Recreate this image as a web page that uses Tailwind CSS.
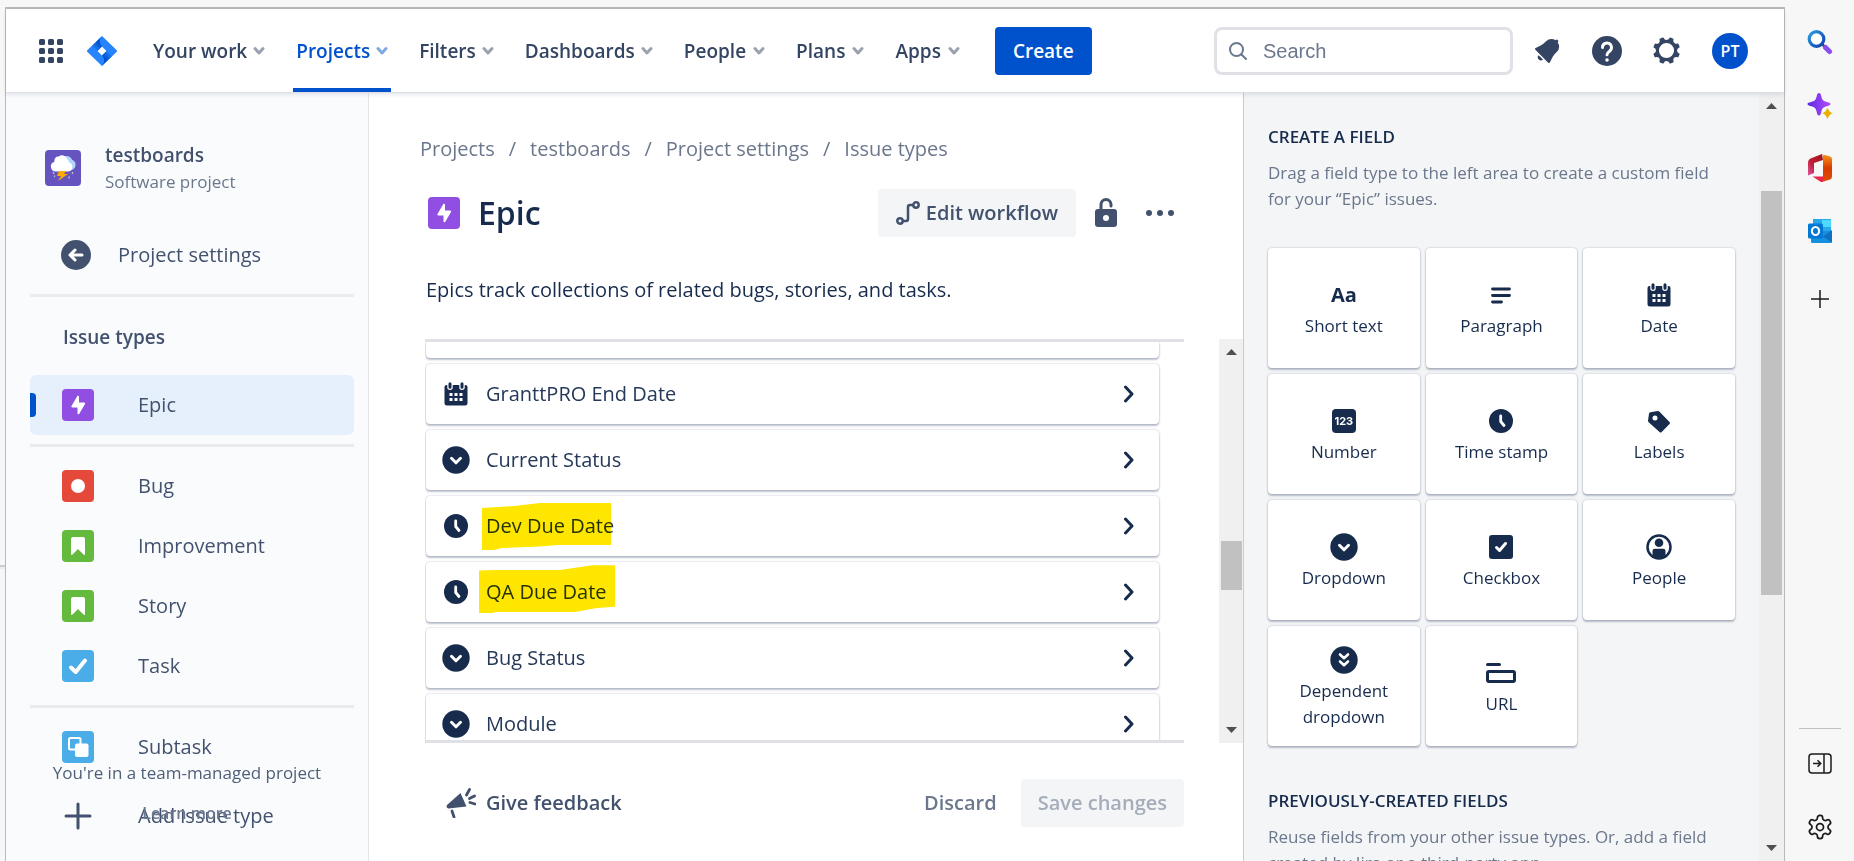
<!DOCTYPE html>
<html lang="en">
<head>
<meta charset="utf-8">
<title>Epic - Issue types - testboards</title>
<script src="https://cdn.jsdelivr.net/npm/@tailwindcss/browser@4"></script>
</head>
<body class="h-screen overflow-hidden bg-[#f7f7f7] font-['Open_Sans','Noto_Sans',sans-serif] text-xl leading-7 text-[#172b4d]">

<svg class="hidden" aria-hidden="true">
  <defs>
    <symbol id="chev" viewBox="0 0 12 10"><path d="M2 2.500 6 7l4-4.500" fill="none" stroke="currentColor" stroke-width="3" stroke-linecap="round" stroke-linejoin="round"/></symbol>
    <symbol id="right" viewBox="0 0 12 18"><path d="M2.500 2 9 9l-6.500 7" fill="none" stroke="currentColor" stroke-width="3" stroke-linecap="round" stroke-linejoin="round"/></symbol>
    <symbol id="calendar" viewBox="0 0 24 24"><path d="M2.500 3h19A2 2 0 0 1 23.500 5v16a2.500 2.500 0 0 1-2.500 2.500H3A2.500 2.500 0 0 1 .5 21V5a2 2 0 0 1 2-2Z" fill="currentColor"/><path d="M6 1.800v3.400M18 1.800v3.400" stroke="#fff" stroke-width="5.500" stroke-linecap="round"/><path d="M6 1.800v3.400M18 1.800v3.400" stroke="currentColor" stroke-width="3" stroke-linecap="round"/><path d="M5.500 11h3v3h-3zM10.500 11h3v3h-3zM15.500 11h3v3h-3zM5.500 16h3v3h-3zM10.500 16h3v3h-3zM15.500 16h3v3h-3z" fill="#fff"/></symbol>
    <symbol id="dropdown" viewBox="0 0 28 28"><circle cx="14" cy="14" r="13.700" fill="currentColor"/><path d="m9.500 12.300 4.500 4.500 4.500-4.500" fill="none" stroke="#fff" stroke-width="3" stroke-linecap="round" stroke-linejoin="round"/></symbol>
    <symbol id="dropdown2" viewBox="0 0 28 28"><circle cx="14" cy="14" r="13.700" fill="currentColor"/><path d="m10 8.500 4 3.700 4-3.700M10 15.500l4 3.700 4-3.700" fill="none" stroke="#fff" stroke-width="2.600" stroke-linecap="round" stroke-linejoin="round"/></symbol>
    <symbol id="clock" viewBox="0 0 24 24"><circle cx="12" cy="12" r="12" fill="currentColor"/><path d="M11.700 7v5.500l3.300 4" fill="none" stroke="#fff" stroke-width="2.800" stroke-linecap="round" stroke-linejoin="round"/></symbol>
    <symbol id="epic" viewBox="0 0 32 32"><rect width="32" height="32" rx="4" fill="#904ee2"/><path d="M15.200 7.200 9.500 17a1 1 0 0 0 .9 1.500h5.100v5.800c0 1 1.300 1.300 1.800.4L23 14.900a1 1 0 0 0-.9-1.500H17V7.700c0-1-1.300-1.400-1.800-.5Z" fill="#fff"/></symbol>
    <symbol id="bug" viewBox="0 0 32 32"><rect width="32" height="32" rx="4" fill="#e5493a"/><circle cx="16" cy="16" r="7" fill="#fff"/></symbol>
    <symbol id="story" viewBox="0 0 32 32"><rect width="32" height="32" rx="4" fill="#63ba3c"/><path d="M11 7h10a2 2 0 0 1 2 2v15c0 1-.8 1.300-1.500.6L16 19l-5.500 5.600C9.800 25.300 9 25 9 24V9a2 2 0 0 1 2-2Z" fill="#fff"/></symbol>
    <symbol id="task" viewBox="0 0 32 32"><rect width="32" height="32" rx="4" fill="#4bade8"/><path d="m9 17.500 4.700 4.500L23 10.500" fill="none" stroke="#fff" stroke-width="4" stroke-linecap="round" stroke-linejoin="round"/></symbol>
    <symbol id="subtask" viewBox="0 0 32 32"><rect width="32" height="32" rx="4" fill="#4bade8"/><rect x="7" y="7" width="11.500" height="11.500" rx="1.500" fill="none" stroke="#fff" stroke-width="2"/><rect x="13" y="12.500" width="13.500" height="13.500" rx="2" fill="#fff"/></symbol>
  </defs>
</svg>

<div class="flex h-full pt-[7px]">
  <div class="w-[5px] shrink-0" aria-hidden="true"><div class="mt-[558px] h-1 border-t-2 border-[#cfcfcf] bg-[#ececec]"></div></div>

  <div class="flex min-w-0 flex-1 flex-col border-x border-t-2 border-[#b9b9b9] bg-white">
    <header class="relative z-10 flex h-[84px] shrink-0 items-center border-b border-[#dcdfe6] bg-white pr-9 pl-[33px] text-[19px] font-semibold text-[#344563] shadow-[0_2px_4px_rgba(9,30,66,0.1)]">
      <button class="mr-6" aria-label="Switch to">
        <svg class="size-6" viewBox="0 0 24 24" fill="currentColor"><rect width="6" height="6" rx="1.500"/><rect x="9" width="6" height="6" rx="1.500"/><rect x="18" width="6" height="6" rx="1.500"/><rect y="9" width="6" height="6" rx="1.500"/><rect x="9" y="9" width="6" height="6" rx="1.500"/><rect x="18" y="9" width="6" height="6" rx="1.500"/><rect y="18" width="6" height="6" rx="1.500"/><rect x="9" y="18" width="6" height="6" rx="1.500"/><rect x="18" y="18" width="6" height="6" rx="1.500"/></svg>
      </button>
      <a href="#" class="mr-[33px]" aria-label="Jira home">
        <svg class="size-[30px]" viewBox="0 0 30 30">
          <defs>
            <linearGradient id="ja" x1="14" y1="9" x2="8" y2="15" gradientUnits="userSpaceOnUse"><stop offset="0" stop-color="#0052cc"/><stop offset="1" stop-color="#2684ff"/></linearGradient>
            <linearGradient id="jb" x1="16" y1="21" x2="22" y2="15" gradientUnits="userSpaceOnUse"><stop offset="0" stop-color="#0052cc"/><stop offset="1" stop-color="#2684ff"/></linearGradient>
          </defs>
          <path fill="#2684ff" fill-rule="evenodd" d="M15 0 29.500 14a1.400 1.400 0 0 1 0 2L15 30 .5 16a1.400 1.400 0 0 1 0-2ZM15 10.500 10.500 15l4.500 4.500 4.500-4.500Z"/>
          <path fill="url(#ja)" d="M15 10.500A7 7 0 0 1 15 .3L5 10l5.500 5Z"/>
          <path fill="url(#jb)" d="M19.500 15 15 19.500a7 7 0 0 1 0 10.200L25 20Z"/>
        </svg>
      </a>
      <nav class="flex h-full gap-[25px]" aria-label="Primary">
        <button class="flex items-center gap-[6px] px-[3px]">Your work<svg class="h-[10px] w-3 text-[#9aa1b1]"><use href="#chev"/></svg></button>
        <button class="flex items-center gap-[6px] border-y-4 border-t-transparent border-b-[#0052cc] px-[3px] text-[#0052cc]" aria-current="page">Projects<svg class="h-[10px] w-3 text-[#7fa8e5]"><use href="#chev"/></svg></button>
        <button class="flex items-center gap-[6px] px-[3px]">Filters<svg class="h-[10px] w-3 text-[#9aa1b1]"><use href="#chev"/></svg></button>
        <button class="flex items-center gap-[6px] px-[3px]">Dashboards<svg class="h-[10px] w-3 text-[#9aa1b1]"><use href="#chev"/></svg></button>
        <button class="flex items-center gap-[7px] px-[3px]">People<svg class="h-[10px] w-3 text-[#9aa1b1]"><use href="#chev"/></svg></button>
        <button class="flex items-center gap-[7px] px-[3px]">Plans<svg class="h-[10px] w-3 text-[#9aa1b1]"><use href="#chev"/></svg></button>
        <button class="flex items-center gap-[7px] px-[3px]">Apps<svg class="h-[10px] w-3 text-[#9aa1b1]"><use href="#chev"/></svg></button>
      </nav>
      <button class="ml-8 h-12 rounded-[4px] bg-[#0052cc] px-[18px] text-white">Create</button>
      <label class="ml-auto flex h-12 w-[299px] items-center gap-4 rounded-[8px] border-[3px] border-[#dfe1e6] px-3">
        <svg class="size-[18px] shrink-0 text-[#6b778c]" viewBox="0 0 18 18" fill="none" stroke="currentColor" stroke-width="2" stroke-linecap="round"><circle cx="7.500" cy="7.500" r="6.500"/><path d="m12.500 12.500 4.500 4.500"/></svg>
        <input type="search" placeholder="Search" aria-label="Search" class="min-w-0 flex-1 bg-transparent font-['Liberation_Sans',sans-serif] text-xl font-normal outline-none placeholder:text-[#6b778c]">
      </label>
      <div class="ml-4 flex items-center gap-6">
        <button aria-label="Notifications"><svg class="size-9" viewBox="0 0 24 24" fill="currentColor"><path d="M6.485 17.669a2 2 0 002.829 0l-2.829-2.830a2 2 0 000 2.830zm4.897-12.191l-.725.725c-.782.782-2.210 1.813-3.206 2.311l-3.017 1.509c-.495.248-.584.774-.187 1.171l8.556 8.556c.398.396.922.313 1.171-.188l1.510-3.016c.494-.988 1.526-2.420 2.311-3.206l.725-.726a5.048 5.048 0 00.640-6.356 1.010 1.010 0 10-1.354-1.494c-.023.025-.046.049-.066.075a5.043 5.043 0 00-2.788-.840 5.036 5.036 0 00-3.570 1.478z"/></svg></button>
        <button aria-label="Help"><svg class="size-9" viewBox="0 0 24 24"><circle cx="12" cy="12" r="10" fill="currentColor"/><path d="M9 9.700a3 3 0 1 1 4.700 2.400c-1 .7-1.700 1.200-1.700 2.400" fill="none" stroke="#fff" stroke-width="2" stroke-linecap="round"/><circle cx="12" cy="18" r="1.200" fill="#fff"/></svg></button>
        <button aria-label="Settings"><svg class="size-9" viewBox="0 0 24 24" fill="currentColor" fill-rule="evenodd"><path d="M11.701 16.700a5.002 5.002 0 110-10.003 5.002 5.002 0 010 10.004m8.368-3.117a1.995 1.995 0 01-1.346-1.885c0-.876.563-1.613 1.345-1.885a.48.48 0 00.315-.574 8.947 8.947 0 00-.836-1.993.477.477 0 00-.598-.195 2.040 2.040 0 01-1.290.080 1.988 1.988 0 01-1.404-1.395 2.040 2.040 0 01.076-1.297.478.478 0 00-.196-.597 8.980 8.980 0 00-1.975-.826.479.479 0 00-.574.314 1.995 1.995 0 01-1.885 1.346 1.994 1.994 0 01-1.884-1.345.482.482 0 00-.575-.315c-.708.200-1.379.485-2.004.842a.47.47 0 00-.198.582A2.002 2.002 0 014.445 7.060a.478.478 0 00-.595.196 8.946 8.946 0 00-.833 1.994.48.48 0 00.308.572 1.995 1.995 0 011.323 1.877c0 .867-.552 1.599-1.324 1.877a.479.479 0 00-.308.570 8.990 8.990 0 00.723 1.790.477.477 0 00.624.194c.595-.273 1.343-.264 2.104.238.117.077.225.185.302.300.527.800.512 1.580.198 2.188a.473.473 0 00.168.628 8.946 8.946 0 002.110.897.474.474 0 00.570-.313 1.995 1.995 0 011.886-1.353c.878 0 1.618.567 1.887 1.353a.475.475 0 00.570.313 8.964 8.964 0 002.084-.883.473.473 0 00.167-.631c-.318-.608-.337-1.393.191-2.195.077-.116.185-.225.302-.302.772-.511 1.527-.513 2.125-.230a.477.477 0 00.628-.190 8.925 8.925 0 00.728-1.793.478.478 0 00-.314-.573"/></svg></button>
        <button class="ml-[3px] size-9 rounded-full bg-[#0052cc] text-base font-semibold text-white" aria-label="Your profile">PT</button>
      </div>
    </header>

    <div class="flex min-h-0 flex-1">
      <aside class="relative w-[363px] shrink-0 overflow-hidden border-r border-[#e3e5ea] bg-[#fafbfd] pt-12 pr-[14px] pl-6 text-[#42526e]">
        <div class="flex items-center gap-6 pl-[15px]">
          <svg class="size-9 shrink-0" viewBox="0 0 36 36"><rect width="36" height="36" rx="4" fill="#6554c0"/><path d="M19 20h6.500a5.300 5.300 0 0 0 1.500-10.300A6 6 0 0 0 17 8Z" fill="#b3d4ff"/><path d="M10.500 21.500a5 5 0 0 1-1-9.800 4 4 0 0 1 4.300-5.200 5.300 5.300 0 0 1 8.200 2.200 6 6 0 0 1 2 3.800 4.600 4.600 0 0 1-1.500 9Z" fill="#fff"/><path d="m14 21-2 5h4l-3 5 10-7h-4l2-3Z" fill="#ffab00"/><path d="M8.500 22.500v1M27.500 22.500v1M24 27v1M9.500 26v.5" stroke="#b3bac5" stroke-width="1.500" stroke-linecap="round"/></svg>
          <div>
            <p class="text-[19px] leading-7 font-semibold">testboards</p>
            <p class="text-[17px] leading-[26px] text-[#6b778c]">Software project</p>
          </div>
        </div>

        <a href="#" class="mt-[30px] flex h-[60px] items-center gap-[27px] pl-[31px]">
          <svg class="size-[30px]" viewBox="0 0 30 30"><circle cx="15" cy="15" r="15" fill="currentColor"/><path d="M21 15H9.500m4.500-5-5 5 5 5" fill="none" stroke="#fff" stroke-width="3" stroke-linecap="round" stroke-linejoin="round"/></svg>
          <span>Project settings</span>
        </a>
        <hr class="mt-[9px] border-t-[3px] border-[#ebecee]">
        <h2 class="mt-[26px] pl-[33px] text-[19px] leading-7 font-semibold">Issue types</h2>

        <nav class="mt-6 space-y-[9px]" aria-label="Issue types">
          <a href="#" class="flex h-[60px] items-center rounded-md bg-[#e6f0fc]" aria-current="page"><span class="mr-[26px] h-6 w-[6px] rounded-r bg-[#0052cc]"></span><svg class="mr-11 size-8"><use href="#epic"/></svg>Epic</a>
          <hr class="border-t-[3px] border-[#e8eaed]">
          <div>
            <a href="#" class="flex h-[60px] items-center gap-11 pl-8"><svg class="size-8"><use href="#bug"/></svg>Bug</a>
            <a href="#" class="flex h-[60px] items-center gap-11 pl-8"><svg class="size-8"><use href="#story"/></svg>Improvement</a>
            <a href="#" class="flex h-[60px] items-center gap-11 pl-8"><svg class="size-8"><use href="#story"/></svg>Story</a>
            <a href="#" class="flex h-[60px] items-center gap-11 pl-8"><svg class="size-8"><use href="#task"/></svg>Task</a>
          </div>
          <hr class="border-t-[3px] border-[#e8eaed]">
          <a href="#" class="flex h-[60px] items-center gap-11 pl-8"><svg class="size-8"><use href="#subtask"/></svg>Subtask</a>
          <button class="flex h-[60px] w-full items-center gap-11 pl-8"><svg class="size-8" viewBox="0 0 32 32"><path d="M16 4v24M4 16h24" stroke="currentColor" stroke-width="3" stroke-linecap="round"/></svg>Add issue type</button>
        </nav>

        <div class="absolute inset-x-0 bottom-[35px] text-center text-[17px] leading-[26px]">
          <p class="text-[#505f79]">You're in a team-managed project</p>
          <a href="#" class="mt-[14px] block text-base leading-[26px] font-semibold text-[#6b778c]">Learn more</a>
        </div>
      </aside>

      <main class="flex min-w-0 flex-1 flex-col pt-[42px] pl-14">
        <nav class="-ml-[5px] flex gap-[14px] pr-[59px] text-[#6b778c]" aria-label="Breadcrumb">
          <a href="#">Projects</a><span>/</span><a href="#">testboards</a><span>/</span><a href="#">Project settings</a><span>/</span><a href="#">Issue types</a>
        </nav>
        <div class="mt-[26px] flex h-12 items-center pr-[59px] pl-[3px] text-[#42526e]">
          <svg class="size-8"><use href="#epic"/></svg>
          <h1 class="ml-[18px] text-[32px] leading-10 font-semibold text-[#172b4d]">Epic</h1>
          <button class="mr-[6px] ml-auto flex h-12 items-center gap-[6px] rounded-[4px] bg-[#f4f5f7] px-[18px] text-xl font-semibold">
            <svg class="size-6" viewBox="0 0 24 24" fill="none" stroke="currentColor" stroke-width="2.500"><circle cx="4" cy="20" r="2.700"/><circle cx="20" cy="4" r="2.700"/><path d="M7 20h3a2 2 0 0 0 2-2V6a2 2 0 0 1 2-2h3"/></svg>Edit workflow
          </button>
          <button class="mr-[6px] flex size-12 items-center justify-center" aria-label="Unlocked"><svg class="h-[30px] w-6" viewBox="0 0 24 30"><rect x="1" y="11" width="22" height="18" rx="3" fill="currentColor"/><path d="M7 12V6.500a5 5 0 0 1 10 0V8" fill="none" stroke="currentColor" stroke-width="3" stroke-linecap="round"/><circle cx="12" cy="20" r="3" fill="#fff"/></svg></button>
          <button class="flex size-12 items-center justify-center" aria-label="More actions"><svg class="h-[6px] w-7" viewBox="0 0 28 6" fill="currentColor"><circle cx="3" cy="3" r="3"/><circle cx="14" cy="3" r="3"/><circle cx="25" cy="3" r="3"/></svg></button>
        </div>
        <p class="mt-[39px] pr-[59px] pl-px">Epics track collections of related bugs, stories, and tasks.</p>

        <div class="mt-[35px] flex min-h-0 flex-1 gap-[35px]">
          <div class="min-w-0 flex-1 overflow-hidden border-y-[3px] border-[#dfe1e6] pr-[25px] pl-px text-[#253858]">
            <ul class="space-y-[6px]">
              <li class="h-4 rounded-b-[4px] bg-white shadow-[0_2px_2px_rgba(9,30,66,0.25),0_0_2px_rgba(9,30,66,0.31)]"></li>
              <li><button class="flex h-[60px] w-full items-center rounded-[4px] bg-white px-6 shadow-[0_2px_2px_rgba(9,30,66,0.25),0_0_2px_rgba(9,30,66,0.31)]"><span class="-mx-2 mr-2 flex w-7 justify-center text-[#172b4d]"><svg class="size-6"><use href="#calendar"/></svg></span><span class="ml-2">GranttPRO End Date</span><svg class="ml-auto h-[18px] w-3 text-[#172b4d]"><use href="#right"/></svg></button></li>
              <li><button class="flex h-[60px] w-full items-center rounded-[4px] bg-white px-6 shadow-[0_2px_2px_rgba(9,30,66,0.25),0_0_2px_rgba(9,30,66,0.31)]"><span class="-mx-2 mr-2 flex w-7 justify-center text-[#172b4d]"><svg class="size-7"><use href="#dropdown"/></svg></span><span class="ml-2">Current Status</span><svg class="ml-auto h-[18px] w-3 text-[#172b4d]"><use href="#right"/></svg></button></li>
              <li><button class="flex h-[60px] w-full items-center rounded-[4px] bg-white px-6 shadow-[0_2px_2px_rgba(9,30,66,0.25),0_0_2px_rgba(9,30,66,0.31)]"><span class="-mx-2 mr-2 flex w-7 justify-center text-[#172b4d]"><svg class="size-6"><use href="#clock"/></svg></span><span class="relative ml-2">Dev Due Date<svg class="absolute -top-[10px] -left-1 h-12 w-[130px] mix-blend-multiply" viewBox="0 0 130 48"><path d="M0 6 32 4 58 1h71v42H76L58 44.500 20 46l-8 2H0Z" fill="#ffe600"/></svg></span><svg class="ml-auto h-[18px] w-3 text-[#172b4d]"><use href="#right"/></svg></button></li>
              <li><button class="flex h-[60px] w-full items-center rounded-[4px] bg-white px-6 shadow-[0_2px_2px_rgba(9,30,66,0.25),0_0_2px_rgba(9,30,66,0.31)]"><span class="-mx-2 mr-2 flex w-7 justify-center text-[#172b4d]"><svg class="size-6"><use href="#clock"/></svg></span><span class="relative ml-2">QA Due Date<svg class="absolute -top-[13px] -left-[7px] h-12 w-[136px] mix-blend-multiply" viewBox="0 0 136 48"><path d="M0 5.500 16 5h65l32-4.700h23v41.500l-18 1.200-22 4H16l-2 1H0Z" fill="#ffe600"/></svg></span><svg class="ml-auto h-[18px] w-3 text-[#172b4d]"><use href="#right"/></svg></button></li>
              <li><button class="flex h-[60px] w-full items-center rounded-[4px] bg-white px-6 shadow-[0_2px_2px_rgba(9,30,66,0.25),0_0_2px_rgba(9,30,66,0.31)]"><span class="-mx-2 mr-2 flex w-7 justify-center text-[#172b4d]"><svg class="size-7"><use href="#dropdown"/></svg></span><span class="ml-2">Bug Status</span><svg class="ml-auto h-[18px] w-3 text-[#172b4d]"><use href="#right"/></svg></button></li>
              <li><button class="flex h-[60px] w-full items-center rounded-[4px] bg-white px-6 shadow-[0_2px_2px_rgba(9,30,66,0.25),0_0_2px_rgba(9,30,66,0.31)]"><span class="-mx-2 mr-2 flex w-7 justify-center text-[#172b4d]"><svg class="size-7"><use href="#dropdown"/></svg></span><span class="ml-2">Module</span><svg class="ml-auto h-[18px] w-3 text-[#172b4d]"><use href="#right"/></svg></button></li>
            </ul>
          </div>
          <div class="flex w-6 shrink-0 flex-col items-center bg-[#f0f0f0] py-[10px] text-[#505050]" aria-hidden="true">
            <svg class="h-[6px] w-[11px]" viewBox="0 0 11 6" fill="currentColor"><path d="M5.500 0 11 6H0Z"/></svg>
            <div class="mt-[186px] h-[49px] w-[21px] bg-[#c1c1c1]"></div>
            <svg class="mt-auto h-[6px] w-[11px]" viewBox="0 0 11 6" fill="currentColor"><path d="M0 0h11L5.500 6Z"/></svg>
          </div>
        </div>

        <footer class="flex shrink-0 items-center pt-9 pr-[59px] pb-[34px] pl-[21px] text-xl font-semibold text-[#42526e]">
          <button class="flex items-center gap-[10px]">
            <svg class="size-[30px]" viewBox="0 0 30 30"><path d="M1 17 14.500 5l6 13.500L2.500 20.500C.7 20.600 0 18.200 1 17Z" fill="currentColor"/><path d="m6 23 2 6M20.500 7 23.500 1.500M23.500 10.500l5-2.500M24 14.500l5 1.500" stroke="currentColor" stroke-width="2.800" stroke-linecap="round"/></svg>Give feedback
          </button>
          <button class="ml-auto h-12 px-6 text-[#6b778c]">Discard</button>
          <button class="h-12 rounded-[4px] bg-[#f4f5f7] px-[17px] text-[#a5adba]" disabled>Save changes</button>
        </footer>
      </main>

      <aside class="flex w-[541px] shrink-0 overflow-hidden border-l border-[#c7ccd4] bg-[#f4f5f7]">
        <div class="min-w-0 flex-1 pt-[31px] pr-6 pl-6 text-[17px] leading-[26px]">
          <h2 class="font-semibold">CREATE A FIELD</h2>
          <p class="mt-[10px] text-[#6b778c]">Drag a field type to the left area to create a custom field for your “Epic” issues.</p>
          <div class="mt-9 grid auto-rows-[120px] grid-cols-3 gap-[6px]">
            <button class="flex flex-col items-center justify-center rounded-sm bg-white shadow-[0_2px_2px_rgba(9,30,66,0.25),0_0_2px_rgba(9,30,66,0.31)]"><span class="flex h-9 items-center text-xl font-bold">Aa</span>Short text</button>
            <button class="flex flex-col items-center justify-center rounded-sm bg-white shadow-[0_2px_2px_rgba(9,30,66,0.25),0_0_2px_rgba(9,30,66,0.31)]"><span class="flex h-9 items-center"><svg class="h-[17px] w-5" viewBox="0 0 20 17"><path d="M1.500 2h17M1.500 8.500h17M1.500 15h9" stroke="currentColor" stroke-width="2.800" stroke-linecap="round"/></svg></span>Paragraph</button>
            <button class="flex flex-col items-center justify-center rounded-sm bg-white shadow-[0_2px_2px_rgba(9,30,66,0.25),0_0_2px_rgba(9,30,66,0.31)]"><span class="flex h-9 items-center"><svg class="size-6"><use href="#calendar"/></svg></span>Date</button>
            <button class="flex flex-col items-center justify-center rounded-sm bg-white shadow-[0_2px_2px_rgba(9,30,66,0.25),0_0_2px_rgba(9,30,66,0.31)]"><span class="flex h-9 items-center"><span class="flex size-6 items-center justify-center rounded-[4px] bg-[#172b4d] font-[Inter,sans-serif] text-[11px] font-bold text-white">123</span></span>Number</button>
            <button class="flex flex-col items-center justify-center rounded-sm bg-white shadow-[0_2px_2px_rgba(9,30,66,0.25),0_0_2px_rgba(9,30,66,0.31)]"><span class="flex h-9 items-center"><svg class="size-6"><use href="#clock"/></svg></span>Time stamp</button>
            <button class="flex flex-col items-center justify-center rounded-sm bg-white shadow-[0_2px_2px_rgba(9,30,66,0.25),0_0_2px_rgba(9,30,66,0.31)]"><span class="flex h-9 items-center"><svg class="size-6" viewBox="0 0 24 24"><path d="M3.500 3.200 10.500 2a2 2 0 0 1 1.800.6L22.500 13a1.500 1.500 0 0 1 0 2l-7.800 8a1.500 1.500 0 0 1-2.200 0L1.700 13.300A2 2 0 0 1 1 11.700l1-7a1.800 1.800 0 0 1 1.500-1.500Z" fill="currentColor"/><circle cx="8" cy="9" r="2.500" fill="#fff"/></svg></span>Labels</button>
            <button class="flex flex-col items-center justify-center rounded-sm bg-white shadow-[0_2px_2px_rgba(9,30,66,0.25),0_0_2px_rgba(9,30,66,0.31)]"><span class="flex h-9 items-center"><svg class="size-7"><use href="#dropdown"/></svg></span>Dropdown</button>
            <button class="flex flex-col items-center justify-center rounded-sm bg-white shadow-[0_2px_2px_rgba(9,30,66,0.25),0_0_2px_rgba(9,30,66,0.31)]"><span class="flex h-9 items-center"><svg class="size-6" viewBox="0 0 24 24"><rect width="24" height="24" rx="3" fill="currentColor"/><path d="m7.500 12.500 3 3 6-7" fill="none" stroke="#fff" stroke-width="3" stroke-linecap="round" stroke-linejoin="round"/></svg></span>Checkbox</button>
            <button class="flex flex-col items-center justify-center rounded-sm bg-white shadow-[0_2px_2px_rgba(9,30,66,0.25),0_0_2px_rgba(9,30,66,0.31)]"><span class="flex h-9 items-center"><svg class="size-[26px]" viewBox="0 0 26 26"><circle cx="13" cy="13" r="11.500" fill="none" stroke="currentColor" stroke-width="2.500"/><circle cx="13" cy="8.800" r="4.300" fill="currentColor"/><path d="M6.500 22v-5a2.300 2.300 0 0 1 2.300-2.300h8.400a2.300 2.300 0 0 1 2.300 2.300v5l-6.500 2.800Z" fill="currentColor"/></svg></span>People</button>
            <button class="flex flex-col items-center justify-center rounded-sm bg-white px-6 shadow-[0_2px_2px_rgba(9,30,66,0.25),0_0_2px_rgba(9,30,66,0.31)]"><span class="flex h-9 items-center"><svg class="size-7"><use href="#dropdown2"/></svg></span>Dependent dropdown</button>
            <button class="flex flex-col items-center justify-center rounded-sm bg-white shadow-[0_2px_2px_rgba(9,30,66,0.25),0_0_2px_rgba(9,30,66,0.31)]"><span class="flex h-9 items-center"><svg class="h-[21px] w-[30px]" viewBox="0 0 30 21"><path d="M1.500 1.500h12" stroke="currentColor" stroke-width="3" stroke-linecap="round"/><rect x="1.500" y="8.500" width="27" height="10" rx="1.500" fill="none" stroke="currentColor" stroke-width="3"/></svg></span>URL</button>
          </div>
          <h2 class="mt-[42px] font-semibold">PREVIOUSLY-CREATED FIELDS</h2>
          <p class="mt-[10px] text-[#6b778c]">Reuse fields from your other issue types. Or, add a field created by Jira or a third-party app.</p>
        </div>
        <div class="flex w-[25px] shrink-0 flex-col items-center bg-[#f0f0f0] py-[10px] text-[#505050]" aria-hidden="true">
          <svg class="h-[6px] w-[11px]" viewBox="0 0 11 6" fill="currentColor"><path d="M5.500 0 11 6H0Z"/></svg>
          <div class="mt-[82px] h-[404px] w-[21px] bg-[#c1c1c1]"></div>
          <svg class="mt-auto h-[6px] w-[11px]" viewBox="0 0 11 6" fill="currentColor"><path d="M0 0h11L5.500 6Z"/></svg>
        </div>
      </aside>
    </div>
  </div>

  <aside class="flex w-[69px] shrink-0 flex-col items-center pt-[22px] pb-5 text-[#1b1b1b]" aria-label="Browser sidebar">
    <button aria-label="Search"><svg class="size-[26px]" viewBox="0 0 26 26"><defs><linearGradient id="sb" x1="0" y1="0" x2="1" y2="1"><stop offset="0" stop-color="#2b9be0"/><stop offset="1" stop-color="#0f3fb5"/></linearGradient></defs><path d="m15.500 15.500 3 3" stroke="#444" stroke-width="2.500"/><circle cx="9.500" cy="10" r="7.300" fill="#fff" stroke="url(#sb)" stroke-width="3.200"/><path d="m18.500 18.500 4 4" stroke="#8a4df0" stroke-width="5" stroke-linecap="round"/></svg></button>
    <button class="mt-[38px]" aria-label="Discover"><svg class="size-[26px]" viewBox="0 0 26 26"><defs><linearGradient id="st" x1="0" y1=".5" x2="1" y2=".5"><stop offset="0" stop-color="#5a2be0"/><stop offset="1" stop-color="#b44dff"/></linearGradient></defs><path d="M12 0c1.300 0 1.800 1 2.300 3.200 1 4 1.700 4.700 5.700 5.700 2.300.6 3.500 1 3.500 2.100s-1.200 1.600-3.500 2.200c-4 1-4.700 1.700-5.700 5.700-.5 2.200-1 3.600-2.300 3.600s-1.800-1.400-2.300-3.600c-1-4-1.700-4.700-5.700-5.700C1.700 12.600.500 12.200.500 11s1.200-1.500 3.500-2.100c4-1 4.700-1.700 5.700-5.700C10.200 1 10.700 0 12 0Z" fill="url(#st)"/><path d="M20.500 15c.7 0 1 4.300 5.500 5.300-4.500 1-4.800 5.400-5.500 5.400s-1-4.400-5.500-5.400c4.500-1 4.800-5.300 5.500-5.300Z" fill="#eab000"/></svg></button>
    <button class="mt-[35px]" aria-label="Office"><svg class="h-7 w-6" viewBox="0 0 24 28"><defs><linearGradient id="oa" x1="0" y1="1" x2="1" y2="0"><stop offset="0" stop-color="#e055a0"/><stop offset=".4" stop-color="#c0203a"/><stop offset="1" stop-color="#a01010"/></linearGradient><linearGradient id="ob" x1="0" y1="0" x2="0" y2="1"><stop offset="0" stop-color="#f79a1c"/><stop offset=".5" stop-color="#d83b01"/><stop offset="1" stop-color="#e04a08"/></linearGradient></defs><path d="M14 0 2.500 4.500Q0 5.700 0 8.500v13L6 19V9l9-3Z" fill="url(#oa)"/><path d="m14 0 8 2.500Q24 3.200 24 5.500v17q0 2.300-2 3L14 28l1-6V0Z" fill="url(#ob)"/><path d="M4.500 22.500H15V28l-2 0Z" fill="#e8274b"/></svg></button>
    <button class="mt-[37px]" aria-label="Outlook"><svg class="size-6" viewBox="0 0 24 24"><path d="M5 0h18v14H5z" fill="#28a8ea"/><path d="M14 1h9v7h-9z" fill="#50d9ff"/><path d="M3 12h21v10.500a1.500 1.500 0 0 1-1.500 1.500h-18A1.500 1.500 0 0 1 3 22.500Z" fill="#1490df"/><path d="M24 11 15 17.500l9 6Z" fill="#0f6fc0"/><rect y="4.500" width="15" height="15" rx="1.500" fill="#0078d4"/><ellipse cx="7.500" cy="12" rx="3.600" ry="4" fill="none" stroke="#fff" stroke-width="2.200"/></svg></button>
    <button class="mt-[47px]" aria-label="Customize"><svg class="size-[18px]" viewBox="0 0 18 18"><path d="M9 0v18M0 9h18" stroke="currentColor" stroke-width="1.500"/></svg></button>
    <hr class="mt-auto w-[42px] border-[#bfbfbf]">
    <button class="mt-[22px]" aria-label="Hide sidebar"><svg class="size-6" viewBox="0 0 24 24" fill="none" stroke="currentColor" stroke-width="1.500"><rect x="1" y="3" width="22" height="19" rx="3"/><path d="M16 3v19M5 12.500h7.500m-3-3.200 3.200 3.200-3.200 3.200"/></svg></button>
    <button class="mt-[38px]" aria-label="Settings"><svg class="size-7" viewBox="0 0 24 24" fill="none" stroke="currentColor" stroke-width="1.500"><path d="M12.220 2h-.44a2 2 0 0 0-2 2v.18a2 2 0 0 1-1 1.730l-.43.25a2 2 0 0 1-2 0l-.15-.08a2 2 0 0 0-2.730.73l-.22.38a2 2 0 0 0 .73 2.730l.15.1a2 2 0 0 1 1 1.720v.51a2 2 0 0 1-1 1.740l-.15.09a2 2 0 0 0-.73 2.730l.22.38a2 2 0 0 0 2.730.73l.15-.08a2 2 0 0 1 2 0l.43.25a2 2 0 0 1 1 1.730V20a2 2 0 0 0 2 2h.44a2 2 0 0 0 2-2v-.18a2 2 0 0 1 1-1.730l.43-.25a2 2 0 0 1 2 0l.15.08a2 2 0 0 0 2.730-.73l.22-.39a2 2 0 0 0-.73-2.730l-.15-.08a2 2 0 0 1-1-1.740v-.5a2 2 0 0 1 1-1.740l.15-.09a2 2 0 0 0 .73-2.730l-.22-.38a2 2 0 0 0-2.730-.73l-.15.08a2 2 0 0 1-2 0l-.43-.25a2 2 0 0 1-1-1.730V4a2 2 0 0 0-2-2z"/><circle cx="12" cy="12" r="3"/></svg></button>
  </aside>
</div>
</body>
</html>
